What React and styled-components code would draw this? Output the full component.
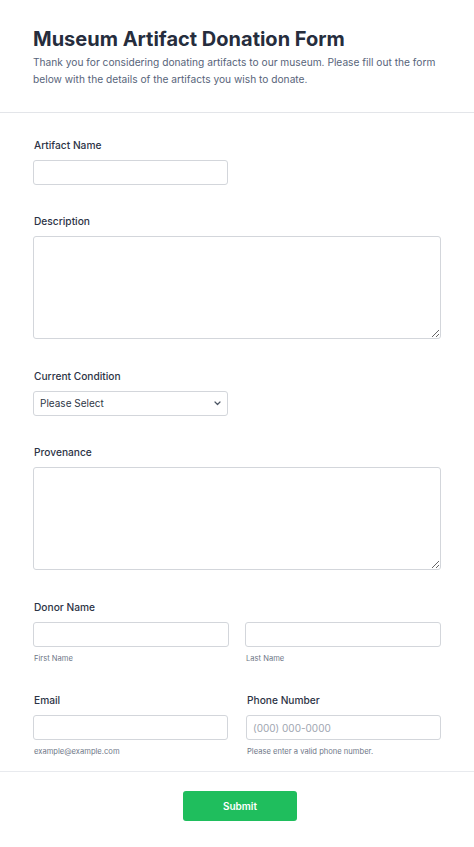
import React from "react";
import styled, { createGlobalStyle } from "styled-components";

const Global = createGlobalStyle`
  html, body { margin: 0; padding: 0; background: #ffffff; }
  body { font-family: Inter, "Noto Sans", sans-serif; -webkit-font-smoothing: antialiased; }
  * { box-sizing: border-box; }
`;

const Page = styled.div`
  width: 474px;
  min-height: 847px;
  background: #fff;
  display: flex;
  flex-direction: column;
`;

const Header = styled.header`
  padding: 26px 33px 24px;
  border-bottom: 1px solid #e3e5e9;
`;

const Title = styled.h1`
  margin: 0 0 1.5px;
  font-size: 20px;
  line-height: 26px;
  font-weight: 700;
  color: #262d3d;
`;

const Subtitle = styled.p`
  margin: 0;
  font-size: 10.2px;
  line-height: 17px;
  color: #57647a;
`;

const Body = styled.main`
  padding: 24px 33px 14px;
  display: flex;
  flex-direction: column;
  gap: 28.5px;
  border-bottom: 1px solid #e8eaee;
`;

const Field = styled.div`
  display: flex;
  flex-direction: column;
`;

const Row = styled.div`
  display: grid;
  grid-template-columns: 1fr 1fr;
  column-gap: ${(p) => p.$gap}px;
`;

const Label = styled.label`
  font-size: 10.2px;
  line-height: 16px;
  font-weight: 500;
  color: #2c3345;
  margin: 0 0 7px 1px;
`;

const Input = styled.input`
  width: ${(p) => (p.$full ? "100%" : "195px")};
  height: 25px;
  border: 1px solid #d3d6db;
  border-radius: 3px;
  padding: 0 6px;
  font-family: Inter, sans-serif;
  font-size: 10px;
  color: #2c3345;
  background: #fff;
  outline: none;
  &::placeholder { color: #a0a6b1; }
`;

const TextArea = styled.textarea`
  width: 100%;
  height: 103px;
  border: 1px solid #d3d6db;
  border-radius: 3px;
  padding: 6px 7px;
  font-family: Inter, sans-serif;
  font-size: 10px;
  resize: vertical;
  outline: none;
  display: block;
`;

const SelectWrap = styled.div`
  position: relative;
  width: 195px;
  height: 25px;
`;

const Select = styled.select`
  appearance: none;
  -webkit-appearance: none;
  width: 100%;
  height: 100%;
  border: 1px solid #d3d6db;
  border-radius: 3px;
  padding: 0 6px;
  font-family: Inter, sans-serif;
  font-size: 10px;
  color: #2f3746;
  background: #fff;
  outline: none;
`;

const Chevron = styled.svg`
  position: absolute;
  right: 7px;
  top: 10px;
  pointer-events: none;
`;

const SubLabel = styled.span`
  margin: 6px 0 0 1px;
  font-size: 7.6px;
  line-height: 11px;
  color: #6f7888;
`;

const Footer = styled.footer`
  display: flex;
  justify-content: center;
  padding: 19px 0 25px 6px;
`;

const Button = styled.button`
  width: 114px;
  height: 30px;
  border: none;
  border-radius: 3px;
  background: #1fbe5d;
  color: #fff;
  font-family: Inter, sans-serif;
  font-size: 10px;
  font-weight: 600;
  cursor: pointer;
`;

export default function App() {
  return (
    <Page>
      <Global />
      <Header>
        <Title>Museum Artifact Donation Form</Title>
        <Subtitle>
          Thank you for considering donating artifacts to our museum. Please fill out the form
          below with the details of the artifacts you wish to donate.
        </Subtitle>
      </Header>
      <Body>
        <Field>
          <Label>Artifact Name</Label>
          <Input />
        </Field>
        <Field>
          <Label>Description</Label>
          <TextArea />
        </Field>
        <Field>
          <Label>Current Condition</Label>
          <SelectWrap>
            <Select defaultValue="">
              <option value="">Please Select</option>
              <option>Excellent</option>
              <option>Good</option>
              <option>Fair</option>
              <option>Poor</option>
            </Select>
            <Chevron width="7" height="5" viewBox="0 0 7 5">
              <path d="M1 1l2.5 2.5L6 1" fill="none" stroke="#4b5563" strokeWidth="1.2" strokeLinecap="round" strokeLinejoin="round" />
            </Chevron>
          </SelectWrap>
        </Field>
        <Field>
          <Label>Provenance</Label>
          <TextArea />
        </Field>
        <Field>
          <Label>Donor Name</Label>
          <Row $gap={16}>
            <Field>
              <Input $full />
              <SubLabel>First Name</SubLabel>
            </Field>
            <Field>
              <Input $full />
              <SubLabel>Last Name</SubLabel>
            </Field>
          </Row>
        </Field>
        <Row $gap={18}>
          <Field>
            <Label>Email</Label>
            <Input $full />
            <SubLabel>example@example.com</SubLabel>
          </Field>
          <Field>
            <Label>Phone Number</Label>
            <Input $full placeholder="(000) 000-0000" />
            <SubLabel>Please enter a valid phone number.</SubLabel>
          </Field>
        </Row>
      </Body>
      <Footer>
        <Button>Submit</Button>
      </Footer>
    </Page>
  );
}
